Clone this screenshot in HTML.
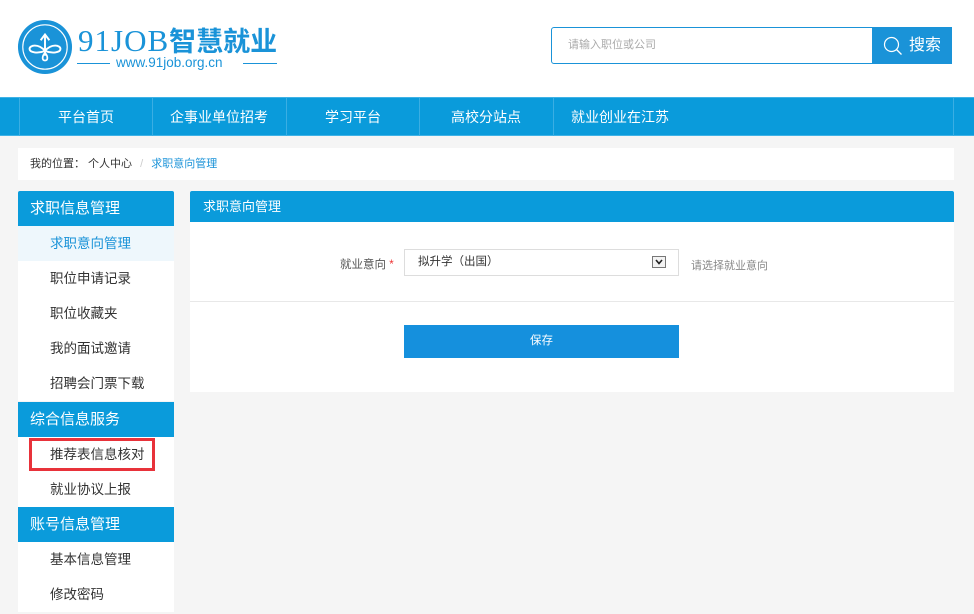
<!DOCTYPE html>
<html><head><meta charset="utf-8">
<style>
*{margin:0;padding:0;box-sizing:border-box}
body{width:974px;height:614px;overflow:hidden;background:#f5f5f5;font-family:"Liberation Sans","Noto Sans CJK SC",sans-serif;color:#333;font-size:13px;position:relative}
.abs{position:absolute}
#hdr{left:0;top:0;width:974px;height:97px;background:#fff}
#nav{left:0;top:97px;width:974px;height:39px;background:#0a9bdb;border-top:1px solid #3fb2e6;border-bottom:1px solid #3fb2e6}
.ni{position:absolute;top:0;height:38px;line-height:38px;text-align:center;color:#fff;font-size:14px;width:133px;border-left:1px solid #3aaee3}
.side-h{position:absolute;left:18px;width:156px;height:35px;background:#0a9bdb;color:#fff;font-size:15px;line-height:35px;padding-left:12px}
.side-i{position:absolute;left:18px;width:156px;height:35px;background:#fff;font-size:13.5px;line-height:35px;padding-left:32px;color:#333}
</style></head><body>
<div id="hdr" class="abs">
  <svg class="abs" style="left:17px;top:19px" width="56" height="56" viewBox="0 0 58 58">
    <circle cx="29" cy="29" r="28" fill="#1a93d8"/>
    <circle cx="29" cy="29" r="23" fill="none" stroke="#fff" stroke-width="1.2"/>
    <path d="M29 17 L29 38 M24.5 22 L29 16 L33.5 22" stroke="#fff" stroke-width="2" fill="none"/>
    <path d="M29 33 C22 25 13 27 13 31 C13 35 22 36 29 33 C36 36 45 35 45 31 C45 27 36 25 29 33" stroke="#fff" stroke-width="2" fill="none"/>
    <path d="M29 35 C25.5 39 26 43 29 43 C32 43 32.5 39 29 35" stroke="#fff" stroke-width="1.8" fill="none"/>
  </svg>
  <div class="abs" style="left:78px;top:22px;font-family:'Liberation Serif','Noto Serif CJK SC',serif;font-size:31px;color:#1a93d8;line-height:36px;white-space:nowrap"><span style="letter-spacing:1px">91JOB</span><span style="font-family:'Noto Sans CJK SC',sans-serif;font-weight:bold;font-size:27px">智慧就业</span></div>
  <div class="abs" style="left:77px;top:63px;width:33px;height:1px;background:#1a93d8"></div>
  <div class="abs" style="left:116px;top:55px;font-size:13.5px;color:#1a93d8;line-height:16px">www.91job.org.cn</div>
  <div class="abs" style="left:243px;top:63px;width:34px;height:1px;background:#1a93d8"></div>
  <div class="abs" style="left:551px;top:27px;width:322px;height:37px;border:1px solid #1a93d8;border-radius:3px 0 0 3px;background:#fff;font-size:11px;color:#aaa;line-height:35px;padding-left:16px">请输入职位或公司</div>
  <div class="abs" style="left:872px;top:27px;width:80px;height:37px;background:#1a93d8;color:#fff;font-size:16px;line-height:37px;padding-left:37px">搜索</div>
  <svg class="abs" style="left:883px;top:36px" width="20" height="20" viewBox="0 0 20 20"><circle cx="8.5" cy="8.5" r="7" fill="none" stroke="#fff" stroke-width="1.2"/><path d="M13.5 13.5 L18.5 18.5" stroke="#fff" stroke-width="1.3"/></svg>
</div>
<div id="nav" class="abs">
  <div class="ni" style="left:19px">平台首页</div>
  <div class="ni" style="left:152px">企事业单位招考</div>
  <div class="ni" style="left:286px">学习平台</div>
  <div class="ni" style="left:419px">高校分站点</div>
  <div class="ni" style="left:553px">就业创业在江苏</div>
  <div class="ni" style="left:953px;width:21px"></div>
</div>
<div class="abs" style="left:18px;top:148px;width:936px;height:32px;background:#fff;font-size:11px;line-height:32px;padding-left:12px;color:#333">我的位置： 个人中心 <span style="color:#ccc;margin:0 5px">/</span> <span style="color:#1a93d8">求职意向管理</span></div>

<div class="side-h" style="top:191px;border-radius:2px 2px 0 0">求职信息管理</div>
<div class="side-i" style="top:226px;background:#eef7fc;color:#1a93d8">求职意向管理</div>
<div class="side-i" style="top:261px">职位申请记录</div>
<div class="side-i" style="top:296px">职位收藏夹</div>
<div class="side-i" style="top:331px">我的面试邀请</div>
<div class="side-i" style="top:366px">招聘会门票下载</div>
<div class="side-h" style="top:402px">综合信息服务</div>
<div class="side-i" style="top:437px">推荐表信息核对</div>
<div class="abs" style="left:29px;top:438px;width:126px;height:33px;border:3px solid #e8323a"></div>
<div class="side-i" style="top:472px">就业协议上报</div>
<div class="side-h" style="top:507px">账号信息管理</div>
<div class="side-i" style="top:542px">基本信息管理</div>
<div class="side-i" style="top:577px">修改密码</div>

<div class="abs" style="left:190px;top:191px;width:764px;height:201px;background:#fff"></div>
<div class="abs" style="left:190px;top:191px;width:764px;height:31px;background:#0a9bdb;color:#fff;font-size:13px;line-height:31px;padding-left:13px;border-radius:2px 2px 0 0">求职意向管理</div>
<div class="abs" style="left:340px;top:256px;font-size:11.5px;color:#555">就业意向 <span style="color:#e33">*</span></div>
<div class="abs" style="left:404px;top:249px;width:275px;height:27px;border:1px solid #ddd;font-size:11.5px;line-height:25px;padding-left:13px">拟升学（出国）</div>
<div class="abs" style="left:652px;top:256px;width:14px;height:12px;border:1px solid #777;background:#f3f3f3"></div>
<svg class="abs" style="left:654px;top:258px" width="10" height="8" viewBox="0 0 10 8"><path d="M2 2 L5 5.5 L8 2" stroke="#222" stroke-width="1.6" fill="none"/></svg>
<div class="abs" style="left:691px;top:257px;font-size:11px;color:#888">请选择就业意向</div>
<div class="abs" style="left:190px;top:301px;width:764px;height:1px;background:#e8e8e8"></div>
<div class="abs" style="left:404px;top:325px;width:275px;height:33px;background:#1590dd;color:#fff;font-size:11.5px;line-height:33px;text-align:center">保存</div>
</body></html>
